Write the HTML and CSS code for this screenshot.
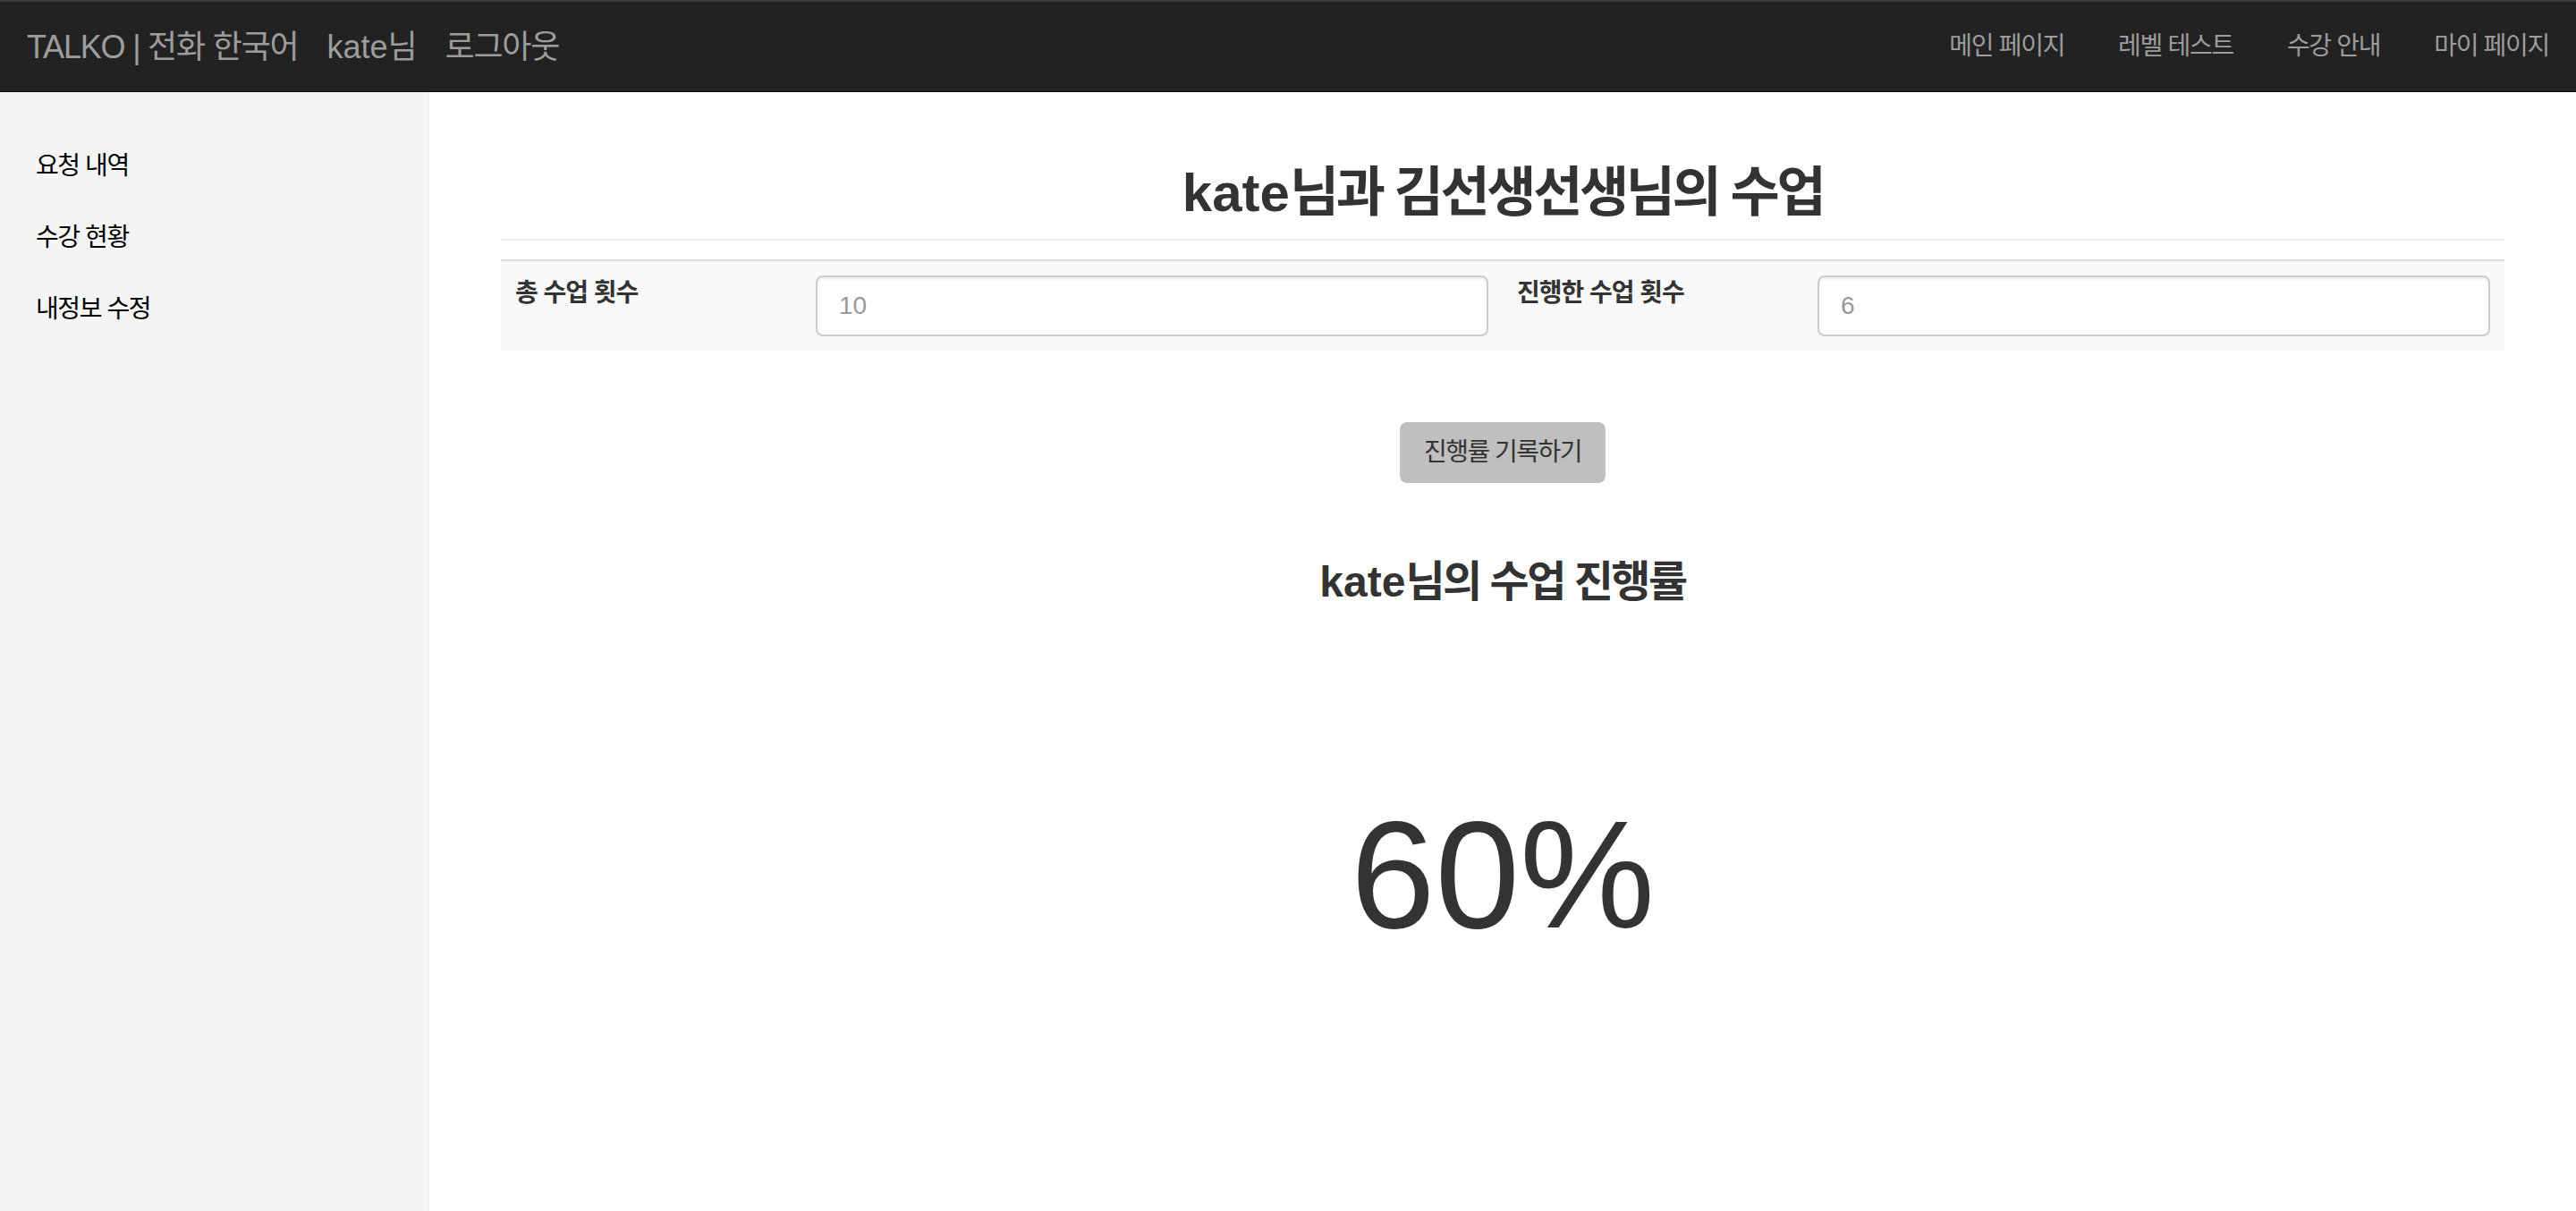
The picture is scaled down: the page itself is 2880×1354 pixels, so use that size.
FILE: index.html
```html
<!DOCTYPE html>
<html lang="ko">
<head>
    <meta charset="UTF-8">
    <meta name="viewport" content="width=device-width, initial-scale=1.0">
    <title>TALKO | 수강 현황</title>
    <link rel="stylesheet" href="styles.css">
</head>
<body>
    <!-- Top Navigation -->
    <nav class="navbar">
        <div class="navbar-left">
            <a class="navbar-brand" href="#">TALKO | 전화 한국어</a>
            <a class="navbar-brand" href="#"><span class="user-name">kate</span>님</a>
            <a class="navbar-brand" href="#">로그아웃</a>
        </div>
        <ul class="navbar-right">
            <li><a href="#">메인 페이지</a></li>
            <li><a href="#">레벨 테스트</a></li>
            <li><a href="#">수강 안내</a></li>
            <li><a href="#">마이 페이지</a></li>
        </ul>
    </nav>

    <div class="layout">
        <!-- Sidebar -->
        <aside class="sidebar">
            <ul class="side-nav">
                <li><a href="#">요청 내역</a></li>
                <li><a href="#">수강 현황</a></li>
                <li><a href="#">내정보 수정</a></li>
            </ul>
        </aside>

        <!-- Main Content -->
        <main class="main">
            <h2 class="page-header"><span class="user-name">kate</span>님과 김선생선생님의 수업</h2>

            <table class="lesson-table">
                <tr>
                    <th>총 수업 횟수</th>
                    <td><input type="text" class="form-control" placeholder="10"></td>
                    <th>진행한 수업 횟수</th>
                    <td><input type="text" class="form-control" placeholder="6"></td>
                </tr>
            </table>

            <div class="actions">
                <button class="btn-record">진행률 기록하기</button>
            </div>

            <h3 class="progress-title"><span class="user-name">kate</span>님의 수업 진행률</h3>
            <div class="progress-value">60%</div>
        </main>
    </div>
</body>
</html>
```
FILE: styles.css
```css
body {
    margin: 0;
    padding: 0;
    font-family: "Liberation Sans", "Noto Sans CJK KR", sans-serif;
    color: #333;
    background: #fff;
}

a {
    text-decoration: none;
}

/* latin names keep normal spacing inside tightened korean text */
.user-name {
    letter-spacing: normal;
}

/* Navbar */
.navbar {
    display: flex;
    justify-content: space-between;
    background: #222;
    border-top: 2px solid #3a3a3a;
    border-bottom: 1px solid #080808;
    height: 100px;
    padding: 0 0 0 30px;
}

.navbar-left {
    display: flex;
    gap: 32px;
}

.navbar-brand {
    color: #9d9d9d;
    font-size: 36px;
    line-height: 40px;
    letter-spacing: -1.2px;
    padding: 31px 0 29px;
}

.navbar-right {
    display: flex;
    list-style: none;
    margin: 0;
    padding: 0;
}

.navbar-right a {
    display: block;
    color: #9d9d9d;
    font-size: 28px;
    line-height: 40px;
    letter-spacing: -1.3px;
    padding: 30px;
}

/* Layout */
.layout {
    display: flex;
    min-height: calc(100vh - 103px);
}

.sidebar {
    flex: none;
    width: 478px;
    background: #f5f5f5;
    border-right: 2px solid #eee;
    padding-top: 43px;
}

.side-nav {
    list-style: none;
    margin: 0;
    padding: 0;
}

.side-nav a {
    display: block;
    color: #000;
    font-size: 28px;
    line-height: 40px;
    letter-spacing: -1.4px;
    padding: 20px 40px;
}

.main {
    flex: 1;
    padding: 80px 80px 40px;
}

.page-header {
    margin: 0 0 21px;
    padding-bottom: 18px;
    border-bottom: 2px solid #eee;
    text-align: center;
    font-size: 60px;
    line-height: 66px;
    font-weight: bold;
    letter-spacing: -3.4px;
    color: #333;
}

/* Lesson count table */
.lesson-table {
    width: 100%;
    border-collapse: collapse;
    background: #f9f9f9;
}

.lesson-table th,
.lesson-table td {
    border-top: 2px solid #ddd;
    padding: 16px;
    vertical-align: top;
    font-size: 28px;
    line-height: 40px;
    text-align: left;
}

.lesson-table th {
    width: 15%;
    font-weight: bold;
    letter-spacing: -1px;
}

.lesson-table td {
    width: 35%;
}

.form-control {
    display: block;
    width: 100%;
    box-sizing: border-box;
    height: 68px;
    padding: 12px 24px;
    font-family: inherit;
    font-size: 28px;
    line-height: 40px;
    color: #555;
    background: #fff;
    border: 2px solid #ccc;
    border-radius: 8px;
    box-shadow: inset 0 2px 2px rgba(0, 0, 0, 0.075);
}

.form-control::placeholder {
    color: #999;
}

.actions {
    text-align: center;
    margin-top: 80px;
}

.btn-record {
    font-family: inherit;
    font-size: 28px;
    line-height: 40px;
    letter-spacing: -1.5px;
    color: #333;
    background: #bfbfbf;
    border: 2px solid #bfbfbf;
    border-radius: 8px;
    padding: 12px 25px;
    cursor: pointer;
}

.progress-title {
    margin: 84px 0 0;
    text-align: center;
    font-size: 48px;
    line-height: 53px;
    font-weight: bold;
    letter-spacing: -2.5px;
    color: #333;
}

.progress-value {
    margin-top: 216px;
    text-align: center;
    font-size: 170px;
    line-height: 170px;
    color: #333;
}
```
